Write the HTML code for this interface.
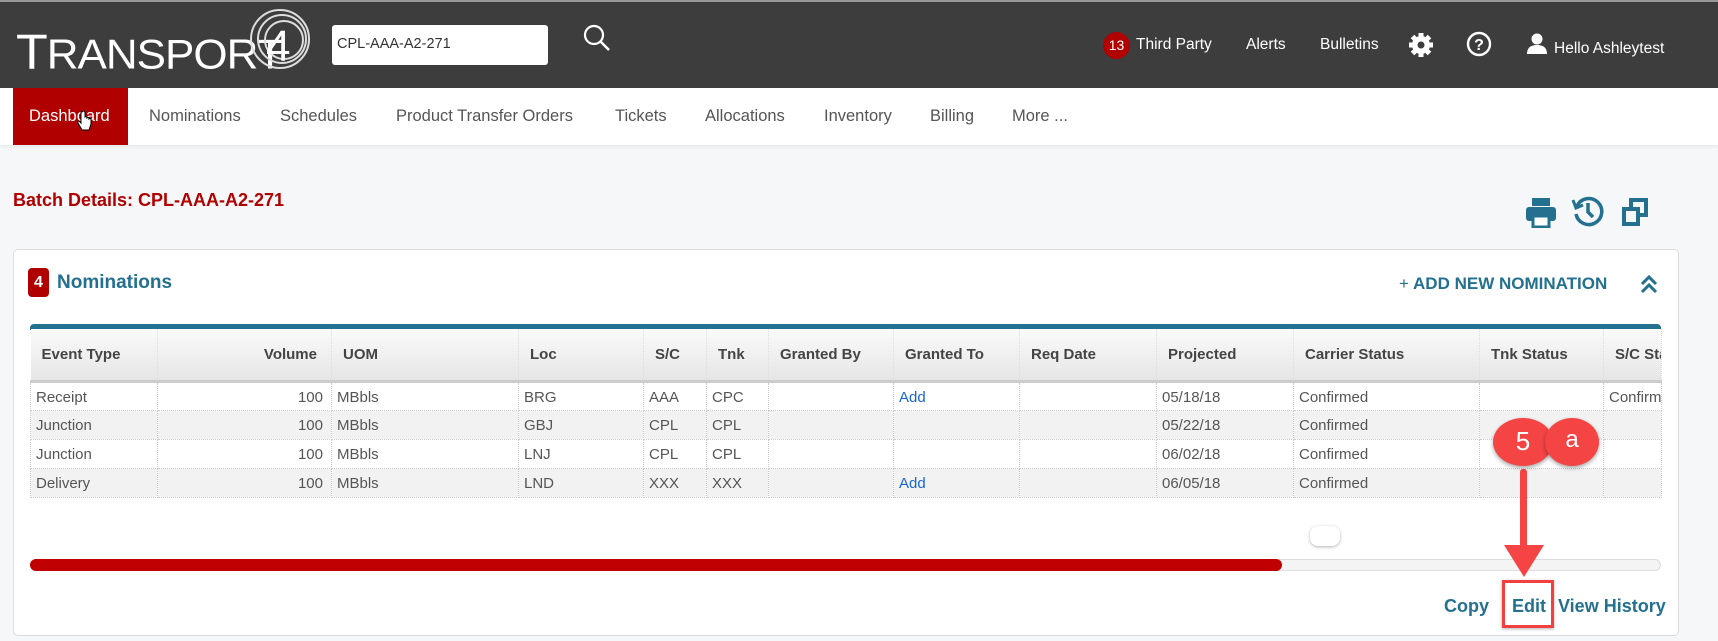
<!DOCTYPE html>
<html><head><style>
*{box-sizing:border-box;margin:0;padding:0}
body{width:1718px;height:641px;overflow:hidden;background:#f5f7f9;font-family:"Liberation Sans",Arial,sans-serif;position:relative}
.hdr{position:absolute;left:0;top:0;width:1718px;height:88px;background:#3d3d3d;border-top:2px solid #999}
.nav{position:absolute;left:0;top:88px;width:1718px;height:57px;background:#fff;box-shadow:0 2px 3px rgba(0,0,0,.06)}
.nav span{position:absolute;top:19px;font-size:16.5px;color:#555}
.a{position:absolute}
.w{color:#fff;font-size:15.5px}
table{border-collapse:collapse;table-layout:fixed;position:absolute;left:30px;top:329px;width:1631px}
th{height:52px;text-align:left;font-size:15px;color:#444;font-weight:bold;padding-left:11px;background:linear-gradient(#fafafa,#e6e6e6);border-right:1px dotted #ddd;border-bottom:3px solid #ccc}
td{height:29px;font-size:15px;color:#555;padding-left:5px;padding-top:2px;border:1px dotted #ccc;border-top:none;white-space:nowrap;overflow:hidden}
tr.g td{background:#f2f2f2}
.r{text-align:right;padding-right:8px}
.b{color:#1a66cc}
.lnk{position:absolute;top:596px;font-size:18px;font-weight:bold;color:#23708f}
</style></head><body>
<div class="hdr">
 <div class="a" style="left:16px;top:22px;font-size:44px;color:#fff;letter-spacing:-1px;font-weight:normal;transform:scaleY(.95);transform-origin:left top;white-space:nowrap"><span style="font-size:52px">T</span>RANSPORT</div>
 <svg class="a" style="left:248px;top:3px" width="64" height="70" viewBox="0 0 64 70"><g fill="none" stroke="#ddd" stroke-width="2"><circle cx="32" cy="34" r="29"/><circle cx="34" cy="34" r="24"/><circle cx="36" cy="35" r="19"/></g><text x="18" y="56" font-size="44" fill="#fff" font-family="Liberation Sans">4</text></svg>
 <div class="a" style="left:332px;top:23px;width:216px;height:40px;background:#fff;border-radius:3px;font-size:14.5px;color:#333;padding:11px 5px">CPL-AAA-A2-271</div>
 <svg class="a" style="left:583px;top:22px" width="28" height="28" viewBox="0 0 28 28"><circle cx="11" cy="11" r="9" fill="none" stroke="#fff" stroke-width="2.2"/><line x1="17" y1="17" x2="26" y2="26" stroke="#fff" stroke-width="2.5"/></svg>
 <div class="a" style="left:1103px;top:30px;width:27px;height:27px;border-radius:50%;background:#b00000;color:#fff;font-size:14px;text-align:center;line-height:27px">13</div>
 <div class="a w" style="left:1136px;top:34px">Third Party</div>
 <div class="a w" style="left:1246px;top:34px">Alerts</div>
 <div class="a w" style="left:1320px;top:34px">Bulletins</div>
 <svg class="a" style="left:1408px;top:30px" width="26" height="26" viewBox="0 0 26 26"><g fill="#fff"><circle cx="13" cy="13" r="9"/><g stroke="#fff" stroke-width="5"><line x1="13" y1="1" x2="13" y2="25"/><line x1="1" y1="13" x2="25" y2="13"/><line x1="4.5" y1="4.5" x2="21.5" y2="21.5"/><line x1="21.5" y1="4.5" x2="4.5" y2="21.5"/></g></g><circle cx="13" cy="13" r="3.5" fill="#3d3d3d"/></svg>
 <svg class="a" style="left:1466px;top:29px" width="26" height="26" viewBox="0 0 26 26"><circle cx="13" cy="13" r="11" fill="none" stroke="#fff" stroke-width="2.4"/><text x="13" y="19" text-anchor="middle" font-size="16" font-weight="bold" fill="#fff" font-family="Liberation Sans">?</text></svg>
 <svg class="a" style="left:1526px;top:31px" width="22" height="22" viewBox="0 0 22 22"><circle cx="11" cy="6" r="5.5" fill="#fff"/><path d="M1 21 Q1 12 11 12 Q21 12 21 21Z" fill="#fff"/></svg>
 <div class="a w" style="left:1554px;top:38px">Hello Ashleytest</div>
</div>
<div class="nav">
 <div class="a" style="left:13px;top:0;width:115px;height:57px;background:#b00000"></div>
 <span style="left:29px;color:#fff">Dashboard</span>
 <span style="left:149px">Nominations</span><span style="left:280px">Schedules</span><span style="left:396px">Product Transfer Orders</span><span style="left:615px">Tickets</span><span style="left:705px">Allocations</span><span style="left:824px">Inventory</span><span style="left:930px">Billing</span><span style="left:1012px">More ...</span>
 <svg class="a" style="left:76px;top:22px" width="16" height="22" viewBox="0 0 16 22"><path d="M5 2 v11 l-2-2 q-2 0-1 2 l4 7 h7 l2-6 v-5 q-1-1-2 0 v-1 q-1-1-2 0 v-1 q-1-1-2 0 v-5 q-1-2-3 0z" fill="#fff" stroke="#000" stroke-width="1"/></svg>
</div>
<div class="a" style="left:13px;top:190px;font-size:18px;font-weight:bold;color:#b00000">Batch Details: CPL-AAA-A2-271</div>
<svg class="a" style="left:1525px;top:196px" width="32" height="32" viewBox="0 0 32 32" fill="#23708f"><rect x="7" y="2" width="18" height="8"/><rect x="1" y="11" width="30" height="14" rx="3"/><rect x="8" y="20" width="16" height="11" fill="#fff" stroke="#23708f" stroke-width="3"/></svg>
<svg class="a" style="left:1571px;top:194px" width="34" height="34" viewBox="0 0 34 34" fill="none" stroke="#23708f" stroke-width="3.5"><path d="M6 12 A13 13 0 1 1 5 20"/><path d="M17 9 v9 l5 5"/><path d="M2 6 l3 8 l7-3" stroke-width="3"/></svg>
<svg class="a" style="left:1621px;top:197px" width="28" height="30" viewBox="0 0 28 30" fill="none" stroke="#23708f" stroke-width="4"><rect x="10" y="3" width="15" height="15"/><rect x="3" y="12" width="14" height="15" fill="#f5f7f9"/></svg>
<div class="a" style="left:13px;top:249px;width:1666px;height:387px;background:#fff;border:1px solid #ddd;border-radius:5px"></div>
<div class="a" style="left:28px;top:268px;width:21px;height:29px;background:#b00000;border-radius:4px;color:#fff;font-weight:bold;font-size:16px;text-align:center;line-height:29px">4</div>
<div class="a" style="left:57px;top:272px;font-size:19px;font-weight:bold;color:#23708f">Nominations</div>
<div class="a" style="left:1399px;top:274px;font-size:17px;font-weight:bold;color:#23708f"><span style="font-weight:normal">+</span> ADD NEW NOMINATION</div>
<svg class="a" style="left:1639px;top:273px" width="20" height="22" viewBox="0 0 20 22" fill="none" stroke="#23708f" stroke-width="3"><path d="M3 11 l7-7 l7 7M3 19 l7-7 l7 7"/></svg>
<div class="a" style="left:30px;top:324px;width:1631px;height:6px;background:#23708f;border-radius:4px 4px 0 0"></div>
<table>
<colgroup><col style="width:127px"><col style="width:174px"><col style="width:187px"><col style="width:125px"><col style="width:63px"><col style="width:62px"><col style="width:125px"><col style="width:126px"><col style="width:137px"><col style="width:137px"><col style="width:186px"><col style="width:124px"><col style="width:58px"></colgroup>
<tr><th>Event Type</th><th class="r" style="padding-right:14px">Volume</th><th>UOM</th><th>Loc</th><th>S/C</th><th>Tnk</th><th>Granted By</th><th>Granted To</th><th>Req Date</th><th>Projected</th><th>Carrier Status</th><th>Tnk Status</th><th style="white-space:nowrap;overflow:hidden">S/C Status</th></tr>
<tr><td>Receipt</td><td class="r">100</td><td>MBbls</td><td>BRG</td><td>AAA</td><td>CPC</td><td></td><td class="b">Add</td><td></td><td>05/18/18</td><td>Confirmed</td><td></td><td>Confirmed</td></tr>
<tr class="g"><td>Junction</td><td class="r">100</td><td>MBbls</td><td>GBJ</td><td>CPL</td><td>CPL</td><td></td><td></td><td></td><td>05/22/18</td><td>Confirmed</td><td></td><td></td></tr>
<tr><td>Junction</td><td class="r">100</td><td>MBbls</td><td>LNJ</td><td>CPL</td><td>CPL</td><td></td><td></td><td></td><td>06/02/18</td><td>Confirmed</td><td></td><td></td></tr>
<tr class="g"><td>Delivery</td><td class="r">100</td><td>MBbls</td><td>LND</td><td>XXX</td><td>XXX</td><td></td><td class="b">Add</td><td></td><td>06/05/18</td><td>Confirmed</td><td></td><td></td></tr>
</table>
<div class="a" style="left:1310px;top:526px;width:30px;height:20px;background:#fff;border-radius:8px;box-shadow:0 1px 3px rgba(0,0,0,.3)"></div>
<div class="a" style="left:30px;top:559px;width:1631px;height:12px;background:#f4f4f4;border:1px solid #ddd;border-radius:6px"></div>
<div class="a" style="left:30px;top:559px;width:1252px;height:12px;background:#c00000;border-radius:6px"></div>
<div class="lnk" style="left:1444px">Copy</div>
<div class="lnk" style="left:1512px">Edit</div>
<div class="lnk" style="left:1558px">View History</div>
<div class="a" style="left:1502px;top:580px;width:52px;height:48px;border:3px solid #f04040;box-shadow:0 1px 3px rgba(0,0,0,.3)"></div>
<div class="a" style="left:1520px;top:469px;width:7px;height:80px;background:#f44444;border-radius:3px"></div>
<svg class="a" style="left:1504px;top:545px" width="40" height="32" viewBox="0 0 40 32"><path d="M0 0 H40 L20 32Z" fill="#f44444"/></svg>
<div class="a" style="left:1493px;top:418px;width:60px;height:48px;border-radius:50%;background:#f44444;color:#fff;font-size:26px;text-align:center;line-height:46px;box-shadow:0 2px 4px rgba(0,0,0,.35)">5</div>
<div class="a" style="left:1545px;top:418px;width:54px;height:48px;border-radius:50%;background:#f44444;color:#fff;font-size:24px;text-align:center;line-height:44px;box-shadow:0 2px 4px rgba(0,0,0,.35)">a</div>
</body></html>
